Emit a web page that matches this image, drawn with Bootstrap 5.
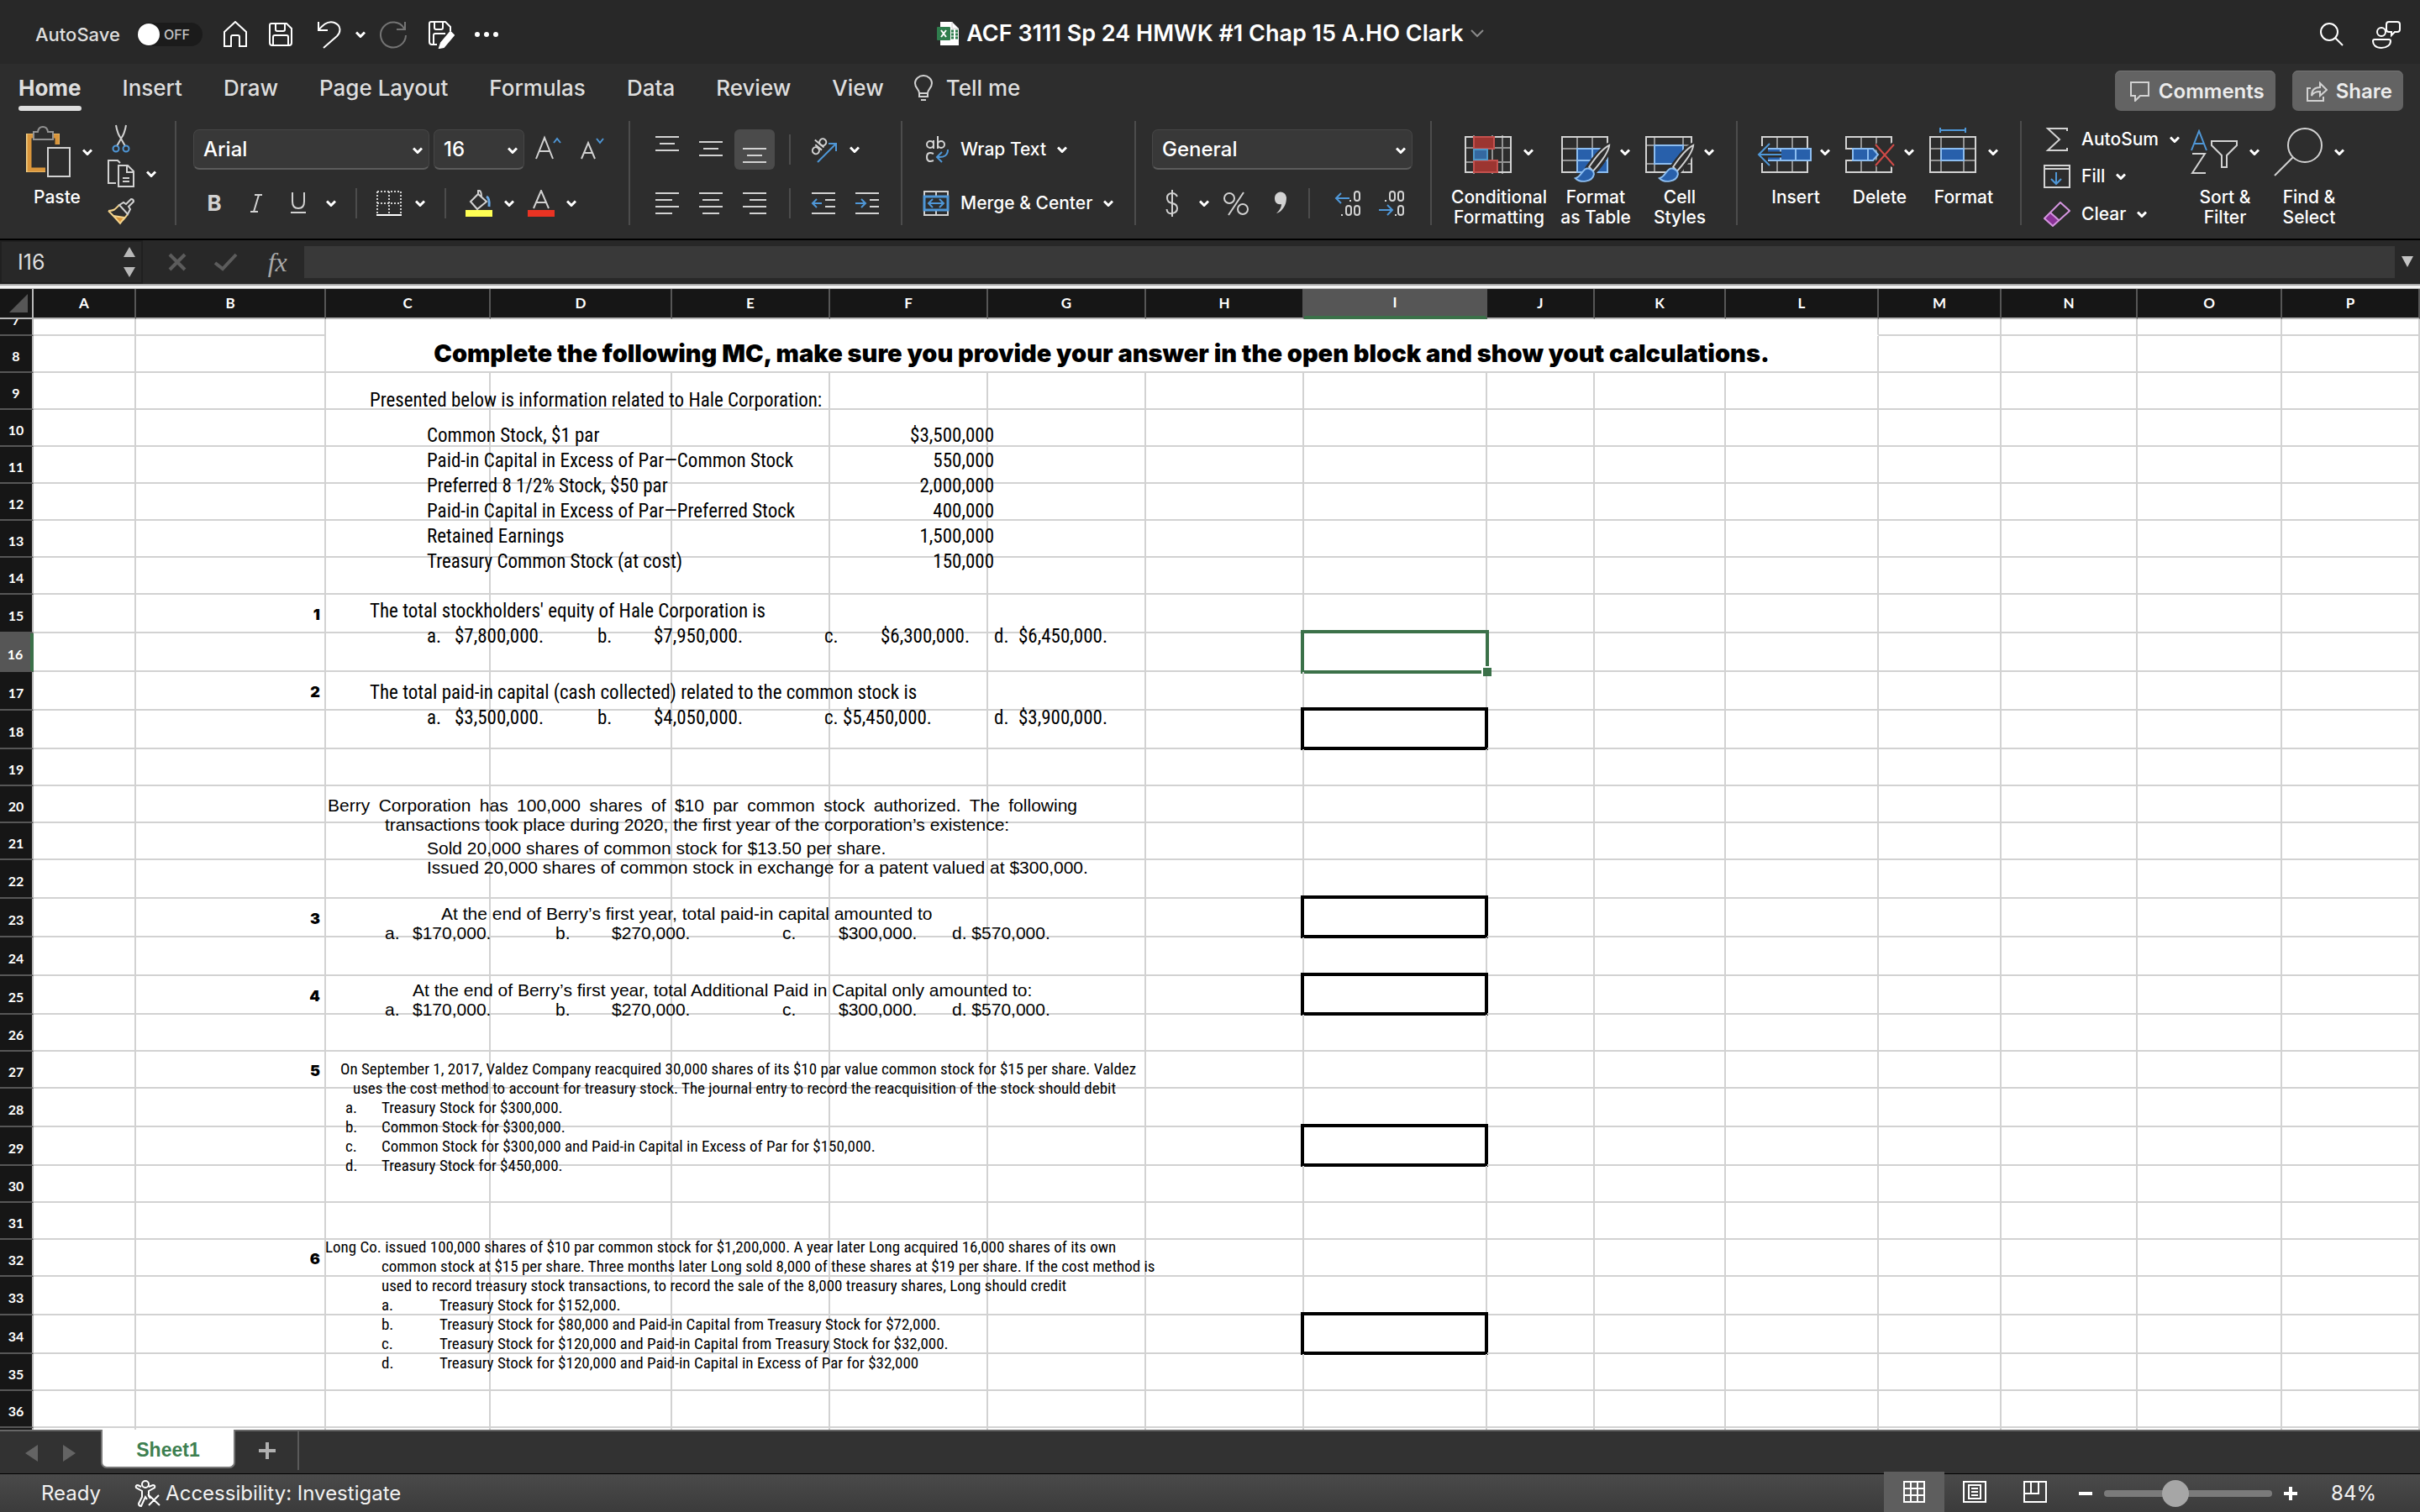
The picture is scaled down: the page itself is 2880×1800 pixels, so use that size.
<!DOCTYPE html>
<html lang="en">
<head>
<meta charset="utf-8">
<meta name="viewport" content="width=device-width, initial-scale=1">
<title>ACF 3111 Sp 24 HMWK #1 Chap 15 A.HO Clark</title>
<link rel="stylesheet" href="https://cdn.jsdelivr.net/npm/bootstrap@5.3.0/dist/css/bootstrap.min.css">
<style>
:root{--ink:#dedede;--soft:#d2d2d2;--blue:#4f97d7;--line:#d2d2d2;--green:#3b7149}
body{font-family:Inter,"Liberation Sans",sans-serif;font-size:21px;font-weight:500;line-height:24px;color:#fff;background:#2d2d2d}
svg{display:block;flex:none;fill:none;stroke:var(--soft);stroke-width:2}
button{font-weight:500}
.plain{background:none;border:0;padding:0;color:inherit;line-height:24px;display:flex;align-items:center}
.caret{width:12px;height:8px;stroke:#fff;stroke-width:3}
/* title bar */
.titlebar{height:76px;background:#282828;padding:5px 20px 0}
.titlebar svg{stroke:#fff}
.side{flex:1 1 0}
.autosave{font-size:22px;color:var(--ink);padding-left:22px}
.switcher{appearance:none;width:78px;height:28px;border-radius:14px;background:#1b1b1b;margin:0}
.knob{left:1px;top:1px;width:26px;height:26px;border-radius:50%;background:#fff;pointer-events:none}
.offword{left:32px;top:2px;font-size:16px;color:#c4c4c4;pointer-events:none}
.docname{font-size:27px;font-weight:600}
/* tabs */
.tabs{height:68px;padding:0 20px 0 22px}
.tabs .nav{gap:49px}
.tabs .nav a{color:var(--ink);font-size:26px;line-height:32px;text-decoration:none;padding:13px 0 7px;border-bottom:6px solid transparent}
.tabs .nav a.current{font-weight:700;position:relative}
.tabs .nav a.current::after{content:"";position:absolute;left:0;right:0;bottom:-4px;height:6px;border-radius:3px;background:var(--ink)}
.tabs .nav a.tell{margin-left:-14px;gap:15px}
.pill{background:#636363;color:#ececec;font-weight:600;font-size:24px;height:48px;border:0;border-radius:7px;padding:2px 13px 0 17px;gap:10px;box-shadow:inset 0 1px #757575}
/* ribbon */
.ribbon{height:140px;border-bottom:2px solid #000;box-sizing:content-box}
.group{height:124px;border-left:2px solid #4c4c4c;flex:none}
.group:first-child{border:0}
.g-clip{width:208px;padding-left:20px}.g-font{width:540px;padding-left:20px}.g-align{width:324px;padding-left:20px}.g-wrap{width:278px;padding-left:24px}
.g-num{width:352px;padding-left:19px}.g-style{width:364px;padding-left:20px}.g-cells{width:338px;padding-left:19px}.g-edit{padding-left:26px}
.stack{padding-top:10px;display:flex;flex-direction:column;gap:20px}
.r1{height:48px;display:flex;align-items:center}
.r2{height:40px;display:flex;align-items:center}
.pick{position:relative;height:48px}
.pick select{appearance:none;width:100%;height:48px;background:#383838;color:#fff;border:1px solid #464646;border-bottom:2px solid #5c5c5c;border-radius:7px;font-size:24px;font-weight:500;padding:0 10px 0 11px}
.pick .caret{position:absolute;right:8px;top:21px;pointer-events:none}
.p-face{width:281px}.p-size{width:108px;margin-left:5px}.p-num{width:310px}
.glyphbtn{width:50px;justify-content:center;font-size:26px;color:var(--soft)}
.alignbtn{width:48px;height:48px;justify-content:center;margin-right:4px;border-radius:6px}
.alignbtn.held{background:#4b4b4b;margin-right:0}
.bar{width:2px;height:36px;background:#4c4c4c;margin:0 23px}
.bar.near{margin-left:17px}
.big{flex-direction:column;text-align:center;padding-top:3px;height:130px}
.big .pic{display:flex;align-items:center;gap:14px;height:68px}
.w-120{width:120px}.w-110{width:110px}.w-100p{width:100px}.w-90{width:90px}
.lbl{margin-top:8px}
.fourteen{gap:14px}.thirteen{gap:13px}
/* formula bar */
.formula{height:52px;background:#282828}
.namebox{width:170px;border:2px solid #202020;padding-left:19px}
.namebox input{width:110px;background:none;border:0;color:var(--ink);font-size:25px;font-weight:400;padding:0}
.fxicons{width:192px;padding-left:30px}
.fx{font:italic 32px/36px "Liberation Serif",serif;color:#a8a8a8}
.fxfield{height:38px;background:#393939;border:0;color:#fff;padding:0 10px}
.rule{height:6px;background:#f4f4f4;border-top:2px solid #a8a8a8;border-bottom:1px solid #bbb;flex:none}
/* sheet */
.sheet{background:#fff;min-height:0;overflow:hidden}
.cells{table-layout:fixed;width:100%;border-collapse:separate;border-spacing:0;color:#000}
.cells th{background:#161616;color:#fff;font-family:Lato,sans-serif;font-weight:700;font-size:17px;line-height:20px;text-align:center;padding:0;border:0 solid #565656}
.cells thead th{height:36px;border-right-width:2px;border-bottom:2px solid #b8b8b8}
.cells thead th:first-child{border-right-color:#b8b8b8}
.cells thead th.on{background:#565656;border-bottom:4px solid var(--green);border-right-color:#565656}
.cells tbody th{border-right:2px solid #b8b8b8;border-bottom:2px solid #565656;padding-top:5px;height:44px;font-size:16px}
.cells tbody th.on{background:#565656;border-right:4px solid var(--green)}
.cells td{border-right:2px solid var(--line);border-bottom:2px solid var(--line);padding:3px 5px 0 0;font:900 18px/22px Inter,sans-serif;text-align:right;position:relative}
.cells tr.tall>*{height:46px}
.cells tr.cut>*{height:20px;padding:0}
.cells tr.cut th{vertical-align:top}
.sliver{height:8px;overflow:hidden;display:flex;align-items:flex-end;justify-content:center;line-height:14px}
.cells td.open{border-bottom-color:#fff}
.cells td.heading{font-size:29px;line-height:40px;text-align:center;padding:0}
.answer::after,.picked::after{content:"";position:absolute;inset:-4px -3px -3px -4px;border:4px solid #000}
.picked::after{border-color:var(--green);inset:-4px -4px -4px -4px}
.picked i{position:absolute;right:-7px;bottom:-7px;width:12px;height:12px;background:var(--green);border:solid #fff;border-width:2px 0 0 2px;z-index:2}
.c-head{width:40px}
/* objects pasted over the grid */
.pasted{left:387px;top:118px;width:1060px;color:#000;font-weight:400}
.slim{font:400 23px/30px "Roboto Condensed","Liberation Sans",sans-serif}
.note{font:400 21px/23px "Liberation Sans",sans-serif}
.fine{font:400 19px/23px "Roboto Condensed","Liberation Sans",sans-serif}
.in-a{padding-left:53px}.in-b{padding-left:121px}.in-c{padding-left:71px}.in-d{padding-left:104px}.in-e{padding-left:138px}
.accounts{width:796px;margin-top:12px}
.choices{display:grid;grid-template-columns:33px 170px 67px 203px 67px 135px 29px auto;white-space:nowrap}
.two{grid-column:span 2}
.q1{margin-top:29px}.q2{margin-top:37px}.q-berry{margin-top:77px}.q3{margin-top:32px}.q4{margin-top:45px}.q5{margin-top:48px}.q6{margin-top:74px}
.spread{width:892px;margin-left:3px;text-align:justify;text-align-last:justify}
.sold{margin-top:5px}
.opts{display:grid;grid-template-columns:43px auto;padding-left:24px}
.opts.wide{grid-template-columns:69px auto;padding-left:67px}
.l1{padding-left:18px}.l2{padding-left:33px}.l3{padding-left:67px}
/* bottom bars */
.sheetbar{height:53px;background:#323232;border-top:2px solid #666;border-bottom:1px solid #000;flex:none}
.sheetbar .arrows{width:120px;padding:0 30px;height:52px}
.leaf{width:160px;height:46px;margin-top:-2px;background:#fff;color:#3d7f50;font:bold 23px/49px "Liberation Sans",sans-serif;border:2px solid #777;border-top:0;border-radius:0 0 7px 7px;text-align:center;text-decoration:none}
.addsheet{width:76px;height:46px;border-right:2px solid #5a5a5a!important;padding-left:28px}
.status{height:45px;background:linear-gradient(#4a4a4a,#3b3b3b);font-weight:400;font-size:24px;color:#f2f2f2;padding:0 52px 0 49px;flex:none}
.status button{font-weight:400;gap:5px}
.status svg{stroke:#fff}
.viewbtn{height:48px;margin-top:-3px;width:72px;justify-content:center}
.viewbtn.held{background:#5e5e5e}
.zoomer{appearance:none;width:200px;height:32px;background:none;margin:0 14px 0 12px}
.zoomer::-webkit-slider-runnable-track{height:8px;border-radius:4px;background:#7b7b7b}
.zoomer::-webkit-slider-thumb{appearance:none;width:32px;height:32px;border-radius:50%;background:#a6a6a6;margin-top:-12px}
</style>
<script src="https://cdn.jsdelivr.net/npm/bootstrap@5.3.0/dist/js/bootstrap.bundle.min.js"></script>
</head>
<body class="d-flex flex-column vh-100 overflow-hidden">
<svg width="0" height="0" class="position-absolute" aria-hidden="true">
<symbol id="dn" viewBox="0 0 12 8"><path d="M1 1.500 6 6.500l5-5"/></symbol>
<symbol id="brush" viewBox="0 0 48 50"><path d="M45 3C35 8 24 24 19 31l6 6C33 28 44 13 45 3z" fill="#2d2d2d" stroke="#2d2d2d" stroke-width="7"/><path d="M45 3C35 8 24 24 20 30l5 5C33 26 44 13 45 3z" fill="#2d2d2d"/><path d="M20 32c-8-2-9 10-17 12 6 6 21 5 23-5 0-4-3-6-6-7z" fill="#2860ab" stroke="#8cbdf0"/></symbol>
</svg>

<header class="titlebar d-flex align-items-center flex-shrink-0">
  <div class="side d-flex align-items-center">
    <label class="autosave" for="autosave">AutoSave</label>
    <span class="position-relative d-flex ms-3 ps-1 me-4"><span class="position-relative d-flex"><input class="switcher" type="checkbox" role="switch" id="autosave"><span class="knob position-absolute"></span><span class="offword position-absolute">OFF</span></span></span>
    <button class="plain" aria-label="Home"><svg width="30" height="32" viewBox="0 0 30 32"><path d="M2 13 15 1l13 12v17h-8V19q0-2-2-2h-6q-2 0-2 2v11H2z"/></svg></button>
    <button class="plain ms-4" aria-label="Save"><svg width="30" height="30" viewBox="0 0 30 30"><path d="M4 2h18l6 6v17q0 3-3 3H5q-3 0-3-3V4q0-2 2-2zM9 2v7q0 2 2 2h7q2 0 2-2V2M6 28V18q0-2 2-2h14q2 0 2 2v10"/></svg></button>
    <button class="plain ms-4 ps-1" aria-label="Undo"><svg width="30" height="34" viewBox="0 0 30 34"><path d="M2 2v10h11M2 12C9 3 16 1 21 3c8 3 8 11 3 16L8 33"/></svg></button>
    <button class="plain ms-3" aria-label="Undo history"><svg class="caret"><use href="#dn"/></svg></button>
    <button class="plain ms-3" aria-label="Redo"><svg width="34" height="34" viewBox="0 0 34 34" style="stroke:#747474"><path d="M31 2v9H21M30 10A15 15 0 1 0 32 18"/></svg></button>
    <button class="plain ms-4" aria-label="Save as"><svg width="32" height="34" viewBox="0 0 32 34"><path d="M11 29H5q-3 0-3-3V4q0-2 2-2h17l6 6v5M8 2v7q0 2 2 2h6q2 0 2-2V2M7 29V18q0-2 2-2h12"/><path d="M27 14l4 4-12 14-5 1 2-6z" fill="#fff"/></svg></button>
    <button class="plain ms-4" aria-label="More"><svg width="28" height="6" viewBox="0 0 28 6"><g fill="#fff" stroke="none"><circle cx="3" cy="3" r="3"/><circle cx="14" cy="3" r="3"/><circle cx="25" cy="3" r="3"/></g></svg></button>
  </div>
  <h1 class="docname d-flex align-items-center m-0">
    <svg class="me-2" width="28" height="30" viewBox="0 0 28 30"><path d="M5 1h14l8 8v20H5z" fill="#fff" stroke="none"/><path d="M19 1v8h8" stroke="#ccc" stroke-width="1"/><path d="M18 12h3m2 0h3m-8 4h3m2 0h3m-8 4h3m2 0h3" stroke="#2f7d4d" stroke-width="3"/><rect x="1" y="7" width="16" height="16" rx="1" fill="#2f7d4d" stroke="none"/><path d="m6 11 6 8m0-8-6 8" stroke="#fff"/></svg>
    ACF 3111 Sp 24 HMWK #1 Chap 15 A.HO Clark
    <svg class="ms-2" width="16" height="10" viewBox="0 0 16 10" style="stroke:#8a8a8a"><path d="m1 1 7 7 7-7"/></svg></h1>
  <div class="side d-flex align-items-center justify-content-end">
    <button class="plain" aria-label="Search"><svg width="30" height="30" viewBox="0 0 30 30"><circle cx="12" cy="12" r="10"/><path d="m19 19 9 9"/></svg></button>
    <button class="plain ms-4 ps-2" aria-label="Account"><svg width="38" height="34" viewBox="0 0 38 34"><circle cx="12" cy="14" r="5"/><path d="M4 23h17q2 0 2 2c0 4-4 8-11 8S2 29 2 25q0-2 2-2zM21 2h10q3 0 3 3v6q0 3-3 3h-3l-4 4v-4h-3q-3 0-3-3V5q0-3 3-3z"/></svg></button>
  </div>
</header>

<div class="tabs d-flex align-items-start flex-shrink-0">
  <nav class="nav" aria-label="Ribbon tabs">
    <a class="current" href="#home">Home</a><a href="#insert">Insert</a><a href="#draw">Draw</a><a href="#layout">Page Layout</a><a href="#formulas">Formulas</a><a href="#data">Data</a><a href="#review">Review</a><a href="#view">View</a>
    <a class="tell d-flex" href="#tellme"><svg width="24" height="32" viewBox="0 0 24 32"><path d="M7 22c0-5-5-6-5-12a10 9 0 0 1 20 0c0 6-5 7-5 12zM7 22v4h10v-4M9 30h6"/></svg>Tell me</a>
  </nav>
  <div class="ms-auto d-flex pt-2 gap-3">
    <button class="pill d-flex align-items-center"><svg width="25" height="24" viewBox="0 0 25 24"><path d="M2 1h21v16H13l-6 6v-6H2z"/></svg>Comments</button>
    <button class="pill d-flex align-items-center ms-1"><svg width="25" height="24" viewBox="0 0 25 24"><path d="M5 8H1v15h19v-5M6 17c0-7 4-10 10-10V2l8 8-8 7v-5c-5 0-8 1-10 5z" stroke-width="2"/></svg>Share</button>
  </div>
</div>

<section class="ribbon d-flex align-items-start flex-shrink-0">
  <div class="group g-clip d-flex">
    <button class="plain big w-100p"><span class="pic"><svg width="54" height="62" viewBox="0 0 54 62"><path d="M9 10H2v44h22M33 10h7v12" stroke="#f3d38c" stroke-width="2"/><path d="M11 12H5v40h19M34 12h4v10" stroke="#d9953b" stroke-width="5"/><path d="M10 7h5c1-8 11-8 12 0h6v9H10z" stroke="#929292"/><path d="M27 26h26v34H27z"/></svg><svg class="caret"><use href="#dn"/></svg></span><span class="lbl pe-1">Paste<br>&nbsp;</span></button>
    <div class="d-flex flex-column gap-2 pt-1 ps-2">
      <button class="plain" aria-label="Cut"><svg width="32" height="34" viewBox="0 0 32 34"><path d="M10 1c1 6 3 12 6 16l5 9M22 1c-1 6-3 12-6 16l-5 9"/><circle cx="10" cy="29" r="3.500" stroke="#4f97d7"/><circle cx="22" cy="29" r="3.500" stroke="#4f97d7"/></svg></button>
      <button class="plain fourteen" aria-label="Copy"><svg width="32" height="34" viewBox="0 0 32 34"><path d="M10 28H1V1h11l3 3M13 7h11l7 7v18H13zM23 7v8h8M18 22h8M18 26h8"/></svg><svg class="caret"><use href="#dn"/></svg></button>
      <button class="plain mt-1" aria-label="Format painter"><svg width="32" height="32" viewBox="0 0 32 32"><path d="M1 15c7 0 8-2 13-7M15 29c5-4 6-6 9-10M1 15l14 14" stroke="#f3d38c"/><path d="m7 21 13 2-5 7z" fill="#d9953b" stroke="#f3d38c"/><path d="m14 8 5-3 3 2 6-6q3 0 3 3l-6 6 2 3-3 6z"/></svg></button>
    </div>
  </div>
  <div class="group g-font stack">
    <div class="r1">
      <label class="pick p-face"><select aria-label="Font"><option>Arial</option></select><svg class="caret"><use href="#dn"/></svg></label>
      <label class="pick p-size"><select aria-label="Font size"><option>16</option></select><svg class="caret"><use href="#dn"/></svg></label>
      <button class="plain ms-2 ps-1" aria-label="Increase font size"><svg width="34" height="34" viewBox="0 0 34 34"><path d="M2 28 12 3l10 25M6 19h12"/><path d="m23 9 4-5 4 5" stroke="#4f97d7"/></svg></button>
      <button class="plain ms-3 ps-1" aria-label="Decrease font size"><svg width="32" height="34" viewBox="0 0 32 34"><path d="M2 28 10 9l8 19M5 21h10"/><path d="m20 4 4 5 4-5" stroke="#4f97d7"/></svg></button>
    </div>
    <div class="r2">
      <button class="plain glyphbtn fw-bold">B</button>
      <button class="plain glyphbtn" aria-label="Italic"><svg width="16" height="22" viewBox="0 0 16 22"><path d="M6 1h9M1 21h9M11 1 5 21"/></svg></button>
      <button class="plain glyphbtn" aria-label="Underline"><svg width="20" height="26" viewBox="0 0 20 26"><path d="M3 0v11q0 8 7 8t7-8V0M1 24h18"/></svg></button>
      <button class="plain ms-2" aria-label="Underline styles"><svg class="caret"><use href="#dn"/></svg></button>
      <span class="bar"></span>
      <button class="plain gap-3" aria-label="Borders"><svg width="30" height="30" viewBox="0 0 30 30"><path d="M1 1h28M1 15h28M1 1v26M15 1v26M29 1v26" stroke-dasharray="2 2"/><path d="M0 29h30" stroke="#fff"/></svg><svg class="caret"><use href="#dn"/></svg></button>
      <span class="bar"></span>
      <button class="plain fourteen" aria-label="Fill colour"><svg width="32" height="32" viewBox="0 0 32 32"><path d="m6 14 9-9 10 9-11 9zM15 5V1q4-1 4 7"/><path d="M25 8q4 2 3 12" stroke="#6aa9e4" stroke-width="3"/><path d="M0 24h32v8H0z" fill="#ffff54" stroke="none"/></svg><svg class="caret"><use href="#dn"/></svg></button>
      <button class="plain fourteen ms-3" aria-label="Font colour"><svg width="32" height="32" viewBox="0 0 32 32"><path d="m7 22 9-21 9 21M10 15h12"/><path d="M0 24h32v8H0z" fill="#ea3323" stroke="none"/></svg><svg class="caret"><use href="#dn"/></svg></button>
    </div>
  </div>
  <div class="group g-align stack">
    <div class="r1">
      <button class="plain alignbtn" aria-label="Top align"><svg width="28" height="48" viewBox="0 0 28 48"><path d="M0 9h28M5 17h18M0 25h28"/></svg></button>
      <button class="plain alignbtn" aria-label="Middle align"><svg width="28" height="48" viewBox="0 0 28 48"><path d="M0 15h28M5 23h18M0 31h28"/></svg></button>
      <button class="plain alignbtn held" aria-label="Bottom align"><svg width="28" height="48" viewBox="0 0 28 48"><path d="M0 23h28M5 31h18M0 39h28"/></svg></button>
      <span class="bar near"></span>
      <button class="plain thirteen" aria-label="Orientation"><svg width="34" height="32" viewBox="0 0 34 32"><g transform="rotate(-50 10 12)"><circle cx="4" cy="13" r="4"/><path d="M9 8v10"/><circle cx="17" cy="13" r="4"/><path d="M13 4v14"/></g><path d="M9 31 30 10M22 9h9v9" stroke="#4f97d7"/></svg><svg class="caret"><use href="#dn"/></svg></button>
    </div>
    <div class="r2">
      <button class="plain alignbtn" aria-label="Align left"><svg width="28" height="28" viewBox="0 0 28 28"><path d="M0 2h28M0 10h20M0 18h28M0 26h20"/></svg></button>
      <button class="plain alignbtn" aria-label="Align centre"><svg width="28" height="28" viewBox="0 0 28 28"><path d="M0 2h28M4 10h20M0 18h28M4 26h20"/></svg></button>
      <button class="plain alignbtn me-0" aria-label="Align right"><svg width="28" height="28" viewBox="0 0 28 28"><path d="M0 2h28M8 10h20M0 18h28M8 26h20"/></svg></button>
      <span class="bar near"></span>
      <button class="plain" aria-label="Decrease indent"><svg width="30" height="28" viewBox="0 0 30 28"><path d="M2 2h28M18 10h12M18 18h12M2 26h28"/><path d="M14 14H3m5-5-5 5 5 5" stroke="#4f97d7"/></svg></button>
      <button class="plain ms-4" aria-label="Increase indent"><svg width="28" height="28" viewBox="0 0 28 28"><path d="M0 2h28M17 10h11M17 18h11M0 26h28"/><path d="M0 14h12m-5-5 5 5-5 5" stroke="#4f97d7"/></svg></button>
    </div>
  </div>
  <div class="group g-wrap stack">
    <div class="r1"><button class="plain thirteen"><svg width="32" height="34" viewBox="0 0 32 34"><circle cx="9" cy="11" r="4"/><path d="M13 6v10M18 1v15"/><circle cx="22" cy="11" r="4"/><path d="M13 22q-8-3-8 4t8 4"/><path d="M30 17q0 10-12 9m5-6-6 6 6 6" stroke="#4f97d7"/></svg>Wrap Text<svg class="caret"><use href="#dn"/></svg></button></div>
    <div class="r2"><button class="plain thirteen"><svg width="32" height="32" viewBox="0 0 32 32"><path d="M2 2h28v28H2zM16 2v6M16 24v6"/><path d="M2 8h28v16H2z" stroke="#4f97d7" stroke-width="3"/><path d="M7 16h18m-13-5-5 5 5 5m8-10 5 5-5 5" stroke="#4f97d7"/></svg>Merge &amp; Center<svg class="caret"><use href="#dn"/></svg></button></div>
  </div>
  <div class="group g-num stack">
    <div class="r1"><label class="pick p-num"><select aria-label="Number format"><option>General</option></select><svg class="caret"><use href="#dn"/></svg></label></div>
    <div class="r2 ps-3">
      <button class="plain" aria-label="Currency"><svg width="16" height="32" viewBox="0 0 16 32"><path d="M8 0v32M14 8q-2-4-6-4-6 0-6 5.500T8 16t6 6-6 6-6.500-5"/></svg></button>
      <button class="plain ms-4" aria-label="Currency formats"><svg class="caret"><use href="#dn"/></svg></button>
      <button class="plain ms-3" aria-label="Percent"><svg width="32" height="30" viewBox="0 0 32 30"><circle cx="8" cy="9" r="6"/><circle cx="24" cy="22" r="6"/><path d="M25 2 7 29"/></svg></button>
      <button class="plain ms-4 ps-1" aria-label="Comma style"><svg width="18" height="28" viewBox="0 0 18 28"><path d="M2 8a7 7 0 0 1 14-1c0 9-4 16-12 19 4-4 6-7 6-11-5 1-8-2-8-7z" fill="#d2d2d2" stroke="none"/></svg></button>
      <span class="bar ms-4 me-0"></span>
      <button class="plain ms-4 ps-1" aria-label="Increase decimal"><svg width="34" height="32" viewBox="0 0 34 32"><rect x="25" y="2" width="6" height="11" rx="3"/><rect x="15" y="19" width="6" height="11" rx="3"/><rect x="25" y="19" width="6" height="11" rx="3"/><path d="M19 13h2M9 30h2"/><path d="M19 10H3m6-6-6 6 6 6" stroke="#4f97d7"/></svg></button>
      <button class="plain ms-3 ps-1" aria-label="Decrease decimal"><svg width="32" height="32" viewBox="0 0 32 32"><rect x="13" y="2" width="6" height="11" rx="3"/><rect x="23" y="2" width="6" height="11" rx="3"/><rect x="23" y="19" width="6" height="11" rx="3"/><path d="M7 13h2M19 30h2"/><path d="M0 24h16m-6-6 6 6-6 6" stroke="#4f97d7"/></svg></button>
    </div>
  </div>
  <div class="group g-style d-flex">
    <button class="plain big w-120"><span class="pic"><svg width="56" height="58" viewBox="0 0 56 58"><path d="M1 24h54M1 41h54M11 9v46M45 9v46M33 9v46" stroke="#929292"/><path d="M1 11h54v42H1z"/><path d="M11 11h24v14H11zM11 39h28v14H11z" fill="#9c3531" stroke="#c4514e"/><path d="M11 26h16v12H11z" fill="#3468a0" stroke="#4f97c7"/></svg><svg class="caret"><use href="#dn"/></svg></span><span class="lbl">Conditional<br>Formatting</span></button>
    <button class="plain big w-110"><span class="pic"><svg class="overflow-visible" width="56" height="58" viewBox="0 0 56 58"><path d="M1 25h54M1 39h54M19 11v42M37 11v42" stroke="#929292"/><path d="M1 11h54v42H1z"/><path d="M19 25h36v28H19zM37 25v28M19 39h36" fill="#2860ab" stroke="#8cbdf0"/><use href="#brush" x="13" y="18" width="48" height="48"/></svg><svg class="caret"><use href="#dn"/></svg></span><span class="lbl">Format<br>as Table</span></button>
    <button class="plain big w-90"><span class="pic"><svg class="overflow-visible" width="56" height="58" viewBox="0 0 56 58"><path d="M1 21h54M1 43h54M11 11v42M45 11v42" stroke="#929292"/><path d="M1 11h54v42H1z"/><path d="M11 21h34v22H11z" fill="#2860ab" stroke="#8cbdf0"/><use href="#brush" x="13" y="18" width="48" height="48"/></svg><svg class="caret"><use href="#dn"/></svg></span><span class="lbl">Cell<br>Styles</span></button>
  </div>
  <div class="group g-cells d-flex">
    <button class="plain big w-100p"><span class="pic"><svg class="overflow-visible" width="56" height="58" viewBox="0 0 56 58"><path d="M19 11v42M37 11v42" stroke="#929292"/><path d="M1 11h54v42H1z"/><path d="M7 25h52v14H7zM23 25v14M41 25v14" fill="#2860ab" stroke="#8cbdf0"/><path d="M0 22h8v20H0z" fill="#2d2d2d" stroke="none"/><path d="M0 32h24" stroke="#2d2d2d" stroke-width="7"/><path d="M24 32H-3M10 19-3 32l13 13" stroke="#4f97d7"/></svg><svg class="caret"><use href="#dn"/></svg></span><span class="lbl">Insert<br>&nbsp;</span></button>
    <button class="plain big w-100p"><span class="pic"><svg class="overflow-visible" width="56" height="58" viewBox="0 0 56 58"><path d="M19 11v42M37 11v42" stroke="#929292"/><path d="M1 26V11h54v8M1 38v15h54v-8M1 25h8M1 39h8"/><path d="M9 25h24l6 7-6 7H9zM27 25v14" fill="#2860ab" stroke="#8cbdf0"/><path d="m36 20 22 25m0-25L36 45" stroke="#2d2d2d" stroke-width="7"/><path d="m36 20 22 25m0-25L36 45" stroke="#d04a47"/></svg><svg class="caret"><use href="#dn"/></svg></span><span class="lbl">Delete<br>&nbsp;</span></button>
    <button class="plain big w-100p"><span class="pic"><svg class="overflow-visible" width="56" height="58" viewBox="0 0 56 58"><path d="M1 25h54M1 39h54M14 11v42M41 11v42" stroke="#929292"/><path d="M1 11h54v42H1z"/><path d="M14 25h27v14H14z" fill="#2860ab" stroke="#8cbdf0"/><path d="M13 3h30M13 0v6M43 0v6" stroke="#4f97d7"/></svg><svg class="caret"><use href="#dn"/></svg></span><span class="lbl">Format<br>&nbsp;</span></button>
  </div>
  <div class="group g-edit d-flex">
    <div class="d-flex flex-column gap-3 pt-2">
      <button class="plain thirteen"><svg width="32" height="28" viewBox="0 0 32 28"><path d="M28 4V1H5l14 13L5 27h23v-3"/></svg>AutoSum<svg class="caret"><use href="#dn"/></svg></button>
      <button class="plain thirteen"><svg width="32" height="28" viewBox="0 0 32 28"><path d="M1 1h30v26H1zM1 5h30"/><path d="M15 9v14m-6-6 6 6 6-6" stroke="#4f97d7"/></svg>Fill<svg class="caret"><use href="#dn"/></svg></button>
      <button class="plain thirteen"><svg width="32" height="30" viewBox="0 0 32 30"><path d="m1 20 7-7 10 9-7 7z" fill="#8a3297" stroke="none"/><path d="M1 20 20 1l11 10-20 18zM8 13l10 9" stroke="#d595e0"/></svg>Clear<svg class="caret"><use href="#dn"/></svg></button>
    </div>
    <button class="plain big w-100p ms-1"><span class="pic"><svg width="56" height="54" viewBox="0 0 56 54"><path d="m1 25 9-23 9 23M4 17h12" stroke="#4f97d7"/><path d="M2 29h15L2 52h16M25 14h30v5L43 31v14h-6V31L25 19z"/></svg><svg class="caret"><use href="#dn"/></svg></span><span class="lbl">Sort &amp;<br>Filter</span></button>
    <button class="plain big w-100p"><span class="pic"><svg width="58" height="60" viewBox="0 0 58 60"><circle cx="37" cy="22" r="20"/><path d="M23 36 1 58"/></svg><svg class="caret"><use href="#dn"/></svg></span><span class="lbl">Find &amp;<br>Select</span></button>
  </div>
</section>

<div class="formula d-flex align-items-center flex-shrink-0">
  <div class="namebox d-flex align-items-center h-100"><input aria-label="Name box" value="I16"><svg class="ms-3" width="14" height="36" viewBox="0 0 14 36" style="fill:#b8b8b8;stroke:none"><path d="m7 0 7 12H0zM7 36l7-12H0z"/></svg></div>
  <div class="fxicons d-flex align-items-center">
    <button class="plain" aria-label="Cancel"><svg width="22" height="22" viewBox="0 0 22 22" style="stroke:#5c5c5c;stroke-width:4"><path d="m2 2 18 18M20 2 2 20"/></svg></button>
    <button class="plain ms-4 ps-2" aria-label="Enter"><svg width="30" height="22" viewBox="0 0 30 22" style="stroke:#5c5c5c;stroke-width:4"><path d="m2 12 9 7L27 2"/></svg></button>
    <span class="fx ms-4 ps-2 me-2">&hairsp;fx</span>
  </div>
  <input class="fxfield flex-grow-1" aria-label="Formula bar">
  <svg class="mx-2" width="14" height="14" viewBox="0 0 14 14" style="fill:#c4c4c4;stroke:none"><path d="M0 0h14L7 13z"/></svg>
</div>
<div class="rule"></div>

<main class="sheet position-relative flex-grow-1">
  <table class="cells">
    <colgroup id="cols"><col class="c-head"></colgroup>
    <thead><tr id="letters"><th><svg class="ms-auto me-1" width="24" height="24" viewBox="0 0 24 24" style="fill:#565656;stroke:none"><path d="M23 1v22H1z"/></svg></th></tr></thead>
    <tbody id="grid"></tbody>
  </table>
  <div class="pasted position-absolute">
    <div class="slim">
      <div class="in-a">Presented below is information related to Hale Corporation:</div>
      <div class="accounts in-b">
        <div class="d-flex justify-content-between"><span>Common Stock, $1 par</span><span>$3,500,000</span></div>
        <div class="d-flex justify-content-between"><span>Paid-in Capital in Excess of Par—Common Stock</span><span>550,000</span></div>
        <div class="d-flex justify-content-between"><span>Preferred 8 1/2% Stock, $50 par</span><span>2,000,000</span></div>
        <div class="d-flex justify-content-between"><span>Paid-in Capital in Excess of Par—Preferred Stock</span><span>400,000</span></div>
        <div class="d-flex justify-content-between"><span>Retained Earnings</span><span>1,500,000</span></div>
        <div class="d-flex justify-content-between"><span>Treasury Common Stock (at cost)</span><span>150,000</span></div>
      </div>
      <div class="q1"><div class="in-a">The total stockholders' equity of Hale Corporation is</div>
        <div class="choices in-b"><span>a.</span><span>$7,800,000.</span><span>b.</span><span>$7,950,000.</span><span>c.</span><span>$6,300,000.</span><span>d.</span><span>$6,450,000.</span></div></div>
      <div class="q2"><div class="in-a">The total paid-in capital (cash collected) related to the common stock is</div>
        <div class="choices in-b"><span>a.</span><span>$3,500,000.</span><span>b.</span><span>$4,050,000.</span><span class="two">c. $5,450,000.</span><span>d.</span><span>$3,900,000.</span></div></div>
    </div>
    <div class="note">
      <div class="q-berry"><div class="spread">Berry Corporation has 100,000 shares of $10 par common stock authorized. The following</div>
        <div class="in-c">transactions took place during 2020, the first year of the corporation’s existence:</div>
        <div class="in-b sold">Sold 20,000 shares of common stock for $13.50 per share.<br>Issued 20,000 shares of common stock in exchange for a patent valued at $300,000.</div></div>
      <div class="q3"><div class="in-e">At the end of Berry’s first year, total paid-in capital amounted to</div>
        <div class="choices in-c"><span>a.</span><span>$170,000.</span><span>b.</span><span>$270,000.</span><span>c.</span><span>$300,000.</span><span class="two">d. $570,000.</span></div></div>
      <div class="q4"><div class="in-d">At the end of Berry’s first year, total Additional Paid in Capital only amounted to:</div>
        <div class="choices in-c"><span>a.</span><span>$170,000.</span><span>b.</span><span>$270,000.</span><span>c.</span><span>$300,000.</span><span class="two">d. $570,000.</span></div></div>
    </div>
    <div class="fine">
      <div class="q5"><div class="l1">On September 1, 2017, Valdez Company reacquired 30,000 shares of its $10 par value common stock for $15 per share. Valdez</div>
        <div class="l2">uses the cost method to account for treasury stock. The journal entry to record the reacquisition of the stock should debit</div>
        <div class="opts"><span>a.</span><span>Treasury Stock for $300,000.</span><span>b.</span><span>Common Stock for $300,000.</span><span>c.</span><span>Common Stock for $300,000 and Paid-in Capital in Excess of Par for $150,000.</span><span>d.</span><span>Treasury Stock for $450,000.</span></div></div>
      <div class="q6"><div>Long Co. issued 100,000 shares of $10 par common stock for $1,200,000. A year later Long acquired 16,000 shares of its own</div>
        <div class="l3">common stock at $15 per share. Three months later Long sold 8,000 of these shares at $19 per share. If the cost method is<br>used to record treasury stock transactions, to record the sale of the 8,000 treasury shares, Long should credit</div>
        <div class="opts wide"><span>a.</span><span>Treasury Stock for $152,000.</span><span>b.</span><span>Treasury Stock for $80,000 and Paid-in Capital from Treasury Stock for $72,000.</span><span>c.</span><span>Treasury Stock for $120,000 and Paid-in Capital from Treasury Stock for $32,000.</span><span>d.</span><span>Treasury Stock for $120,000 and Paid-in Capital in Excess of Par for $32,000</span></div></div>
    </div>
  </div>
</main>

<div class="sheetbar d-flex align-items-start">
  <div class="arrows d-flex align-items-center justify-content-between"><button class="plain" aria-label="Previous sheet"><svg width="15" height="20" viewBox="0 0 15 20" style="fill:#646464;stroke:none"><path d="M15 0v20L0 10z"/></svg></button><button class="plain" aria-label="Next sheet"><svg width="15" height="20" viewBox="0 0 15 20" style="fill:#646464;stroke:none"><path d="M0 0v20l15-10z"/></svg></button></div>
  <a class="leaf" href="#sheet1">Sheet1</a>
  <button class="plain addsheet" aria-label="Add sheet"><svg width="20" height="20" viewBox="0 0 20 20" style="stroke:#b0b0b0;stroke-width:4"><path d="M10 0v20M0 10h20"/></svg></button>
</div>
<footer class="status d-flex align-items-center">
  <span>Ready</span>
  <button class="plain ms-4 ps-3"><svg width="32" height="32" viewBox="0 0 32 32"><circle cx="13" cy="5" r="4"/><path d="M8 8 4 6q-3 0-2 3l7 4v7L5 28q0 3 3 3l5-11 2 3M17 8l5-2q3 0 2 3l-7 4v6l2 3M16 17l14 13M29 18 17 30"/></svg>Accessibility: Investigate</button>
  <div class="ms-auto d-flex align-items-center">
    <button class="plain viewbtn held" aria-label="Normal view"><svg width="26" height="26" viewBox="0 0 26 26"><path d="M1 1h24v24H1zM1 9h24M1 17h24M9 1v24M17 1v24"/></svg></button>
    <button class="plain viewbtn" aria-label="Page layout view"><svg width="28" height="26" viewBox="0 0 28 26"><path d="M1 1h26v24H1zM7 5h14v16H7zM10 9h8M10 13h8M10 17h8"/></svg></button>
    <button class="plain viewbtn me-3" aria-label="Page break view"><svg width="28" height="26" viewBox="0 0 28 26"><path d="M1 1h26v24H1zM1 15h17V1M9 1v14"/></svg></button>
    <button class="plain" aria-label="Zoom out"><svg width="18" height="16" viewBox="0 0 18 16" style="stroke-width:4"><path d="M0 8h16"/></svg></button>
    <input class="zoomer" type="range" min="0" max="206" value="84" aria-label="Zoom">
    <button class="plain" aria-label="Zoom in"><svg width="16" height="16" viewBox="0 0 16 16" style="stroke-width:4"><path d="M8 0v16M0 8h16"/></svg></button>
    <span class="ms-4 ps-3">84%</span>
  </div>
</footer>
<script>
const widths=[122,226,196,216,188,188,188,188,218,128,156,182,146,162,172,0];
const letters='ABCDEFGHIJKLMNOP';
const tall=[15,16,17,18,22,23,24,25,28,29,33,34];
const asked={15:1,17:2,23:3,25:4,27:5,32:6};
const boxed=[18,23,25,29,34];
const cols=document.getElementById('cols'),heads=document.getElementById('letters'),grid=document.getElementById('grid');
widths.forEach((w,i)=>{
  const c=document.createElement('col');if(w)c.style.width=w+'px';cols.append(c);
  const h=document.createElement('th');h.textContent=letters[i];if(letters[i]=='I')h.className='on';heads.append(h);
});
for(let r=7;r<=37;r++){
  const tr=grid.insertRow();
  if(tall.includes(r))tr.className='tall';
  if(r==7)tr.className='cut';
  const th=document.createElement('th');
  if(r==7)th.innerHTML='<div class="sliver">7</div>';else if(r<37)th.textContent=r;
  if(r==16)th.className='on';
  tr.append(th);
  for(let i=0;i<16;i++){
    const L=letters[i],td=tr.insertCell();
    if(r<9&&L=='C'){td.colSpan=10;td.className=r==7?'open':'heading';if(r==8)td.textContent='Complete the following MC, make sure you provide your answer in the open block and show yout calculations.';i+=9;continue}
    if(L=='B'&&asked[r])td.textContent=asked[r];
    if(L=='I'&&boxed.includes(r))td.className='answer';
    if(L=='I'&&r==16){td.className='picked';td.innerHTML='<i></i>'}
  }
}
</script>
</body>
</html>
